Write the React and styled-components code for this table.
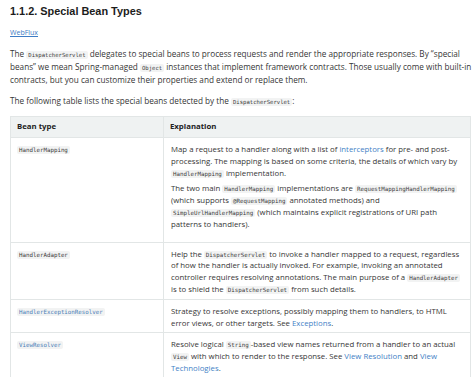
import React from "react";
import styled, { createGlobalStyle } from "styled-components";

const GlobalStyle = createGlobalStyle`
  body {
    margin: 0;
    background: #ffffff;
    font-family: "Open Sans", "Noto Sans", sans-serif;
    color: #3b3b3b;
  }
`;

// each cell: paragraphs -> lines -> parts (string, {code}, {link})
const rows = [
  {
    type: "HandlerMapping",
    linked: false,
    extra: true,
    text: [
      [
        ["Map a request to a handler along with a list of ", { link: "interceptors" }, " for pre- and post-"],
        ["processing. The mapping is based on some criteria, the details of which vary by"],
        [{ code: "HandlerMapping" }, " implementation."]
      ],
      [
        ["The two main ", { code: "HandlerMapping" }, " implementations are ", { code: "RequestMappingHandlerMapping" }],
        ["(which supports ", { code: "@RequestMapping" }, " annotated methods) and"],
        [{ code: "SimpleUrlHandlerMapping" }, " (which maintains explicit registrations of URI path"],
        ["patterns to handlers)."]
      ]
    ]
  },
  {
    type: "HandlerAdapter",
    linked: false,
    text: [
      [
        ["Help the ", { code: "DispatcherServlet" }, " to invoke a handler mapped to a request, regardless"],
        ["of how the handler is actually invoked. For example, invoking an annotated"],
        ["controller requires resolving annotations. The main purpose of a ", { code: "HandlerAdapter" }],
        ["is to shield the ", { code: "DispatcherServlet" }, " from such details."]
      ]
    ]
  },
  {
    type: "HandlerExceptionResolver",
    linked: true,
    text: [
      [
        ["Strategy to resolve exceptions, possibly mapping them to handlers, to HTML"],
        ["error views, or other targets. See ", { link: "Exceptions" }, "."]
      ]
    ]
  },
  {
    type: "ViewResolver",
    linked: true,
    text: [
      [
        ["Resolve logical ", { code: "String" }, "-based view names returned from a handler to an actual"],
        [{ code: "View" }, " with which to render to the response. See ", { link: "View Resolution" }, " and ", { link: "View" }],
        [{ link: "Technologies" }, "."]
      ]
    ]
  }
];

function Rich({ parts }) {
  return parts.map((p, i) => {
    if (typeof p === "string") return <React.Fragment key={i}>{p}</React.Fragment>;
    if (p.code) return <Code key={i}>{p.code}</Code>;
    return <Link key={i}>{p.link}</Link>;
  });
}

export default function App() {
  return (
    <>
      <GlobalStyle />
      <Page>
        <Title>1.1.2. Special Bean Types</Title>
        <SmallLink>WebFlux</SmallLink>
        <Para>
          <Line>
            The <Code small>DispatcherServlet</Code> delegates to special beans to process requests
            and render the appropriate responses. By “special
          </Line>
          <Line>
            beans” we mean Spring-managed <Code small>Object</Code> instances that implement
            framework contracts. Those usually come with built-in
          </Line>
          <Line>contracts, but you can customize their properties and extend or replace them.</Line>
        </Para>
        <Para>
          <Line>
            The following table lists the special beans detected by the{" "}
            <Code small>DispatcherServlet</Code>:
          </Line>
        </Para>
        <Table>
          <colgroup>
            <col style={{ width: 153 }} />
            <col />
          </colgroup>
          <thead>
            <tr>
              <Th>Bean type</Th>
              <Th>Explanation</Th>
            </tr>
          </thead>
          <tbody>
            {rows.map(row => (
              <tr key={row.type}>
                <Td>
                  <Line>
                    <Code linked={row.linked}>{row.type}</Code>
                  </Line>
                </Td>
                <Td>
                  {row.text.map((lines, i) => (
                    <CellPara key={i} extra={row.extra}>
                      {lines.map((parts, j) => (
                        <Line key={j}>
                          <Rich parts={parts} />
                        </Line>
                      ))}
                    </CellPara>
                  ))}
                </Td>
              </tr>
            ))}
          </tbody>
        </Table>
      </Page>
    </>
  );
}

const Page = styled.div`
  padding: 4px 3px 0 10px;
  height: 373px;
  overflow: hidden;
`;

const Title = styled.h2`
  margin: 0;
  font-family: "Liberation Sans", Arial, sans-serif;
  font-size: 10.9px;
  line-height: 15px;
  font-weight: 700;
  color: #1c1c1c;
`;

const SmallLink = styled.a`
  display: block;
  margin-top: 9px;
  font-size: 7px;
  line-height: 10px;
  color: #3d7cc4;
  text-decoration: underline;
`;

const Para = styled.p`
  margin: 8.5px 0 0;
  font-size: 8.2px;
  line-height: 13px;
  color: #363636;

  & + & {
    margin-top: 8px;
  }
`;

const Line = styled.span`
  display: block;
  white-space: nowrap;
`;

const Code = styled.code`
  font-family: "DejaVu Sans Mono", "Liberation Mono", monospace;
  font-size: ${({ small }) => (small ? "5.6px" : "5.8px")};
  line-height: 1;
  background: #f2f3f3;
  color: ${({ linked }) => (linked ? "#4a7fb8" : "#3b3b3b")};
  padding: 1px 2px;
  border-radius: 2px;
`;

const Link = styled.a`
  color: #3f7fc6;
  text-decoration: none;
`;

const Table = styled.table`
  width: 461px;
  margin-top: 9.5px;
  border-collapse: collapse;
  table-layout: fixed;
  font-size: 7.8px;
  line-height: 11.8px;
  color: #363636;
`;

const Th = styled.th`
  height: 20px;
  padding: 0 6px;
  background: #eff2f2;
  border: 1px solid #e2e6e6;
  text-align: left;
  font-weight: 700;
  color: #222222;
`;

const Td = styled.td`
  padding: 6px 6px 3px 6px;
  border: 1px solid #e2e6e6;
  vertical-align: top;

  & + & {
    padding-left: 7px;
  }
`;

const CellPara = styled.p`
  margin: 0 0 4px;

  &:last-child {
    margin-bottom: ${({ extra }) => (extra ? "8px" : "0")};
  }
`;
